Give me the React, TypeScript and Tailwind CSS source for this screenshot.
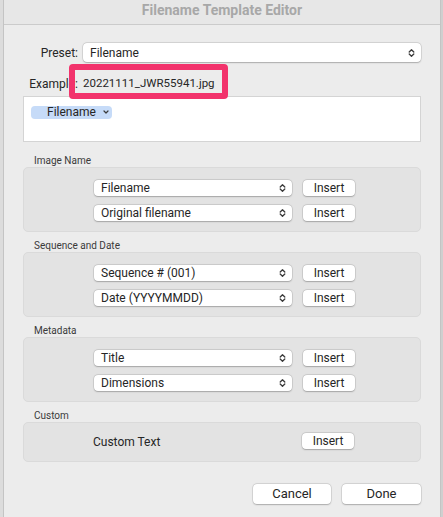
import React from "react";

function UpDown() {
  return (
    <svg width="7" height="10" viewBox="0 0 7 10" fill="none">
      <path d="M1.2 4 L3.5 1.7 L5.8 4" stroke="#3a3a3a" strokeWidth="1.3" strokeLinecap="round" strokeLinejoin="round" />
      <path d="M1.2 6 L3.5 8.3 L5.8 6" stroke="#3a3a3a" strokeWidth="1.3" strokeLinecap="round" strokeLinejoin="round" />
    </svg>
  );
}

function Popup({ label, className }: { label: string; className?: string }) {
  return (
    <div
      className={`flex items-center justify-between bg-white rounded-[4px] pl-[7px] pr-[6px] text-[12px] text-[#262626] shadow-[0_0_0_0.5px_rgba(0,0,0,0.14),0_0.5px_1.5px_rgba(0,0,0,0.22)] ${className ?? ""}`}
    >
      <span className="leading-none">{label}</span>
      <UpDown />
    </div>
  );
}

function Btn({ label, className }: { label: string; className?: string }) {
  return (
    <button
      className={`flex items-center justify-center bg-white rounded-[4px] text-[#262626] shadow-[0_0_0_0.5px_rgba(0,0,0,0.14),0_0.5px_1.5px_rgba(0,0,0,0.22)] ${className ?? ""}`}
    >
      {label}
    </button>
  );
}

function Group({ title, rows }: { title: string; rows: string[] }) {
  return (
    <div className="flex flex-col">
      <div className="pl-[11px] h-[12px] text-[10px] leading-[12px] text-[#3a3a3a]">{title}</div>
      <div className="h-[65px] bg-[#e3e3e3] border border-[#dadada] rounded-[5px] pt-[12px] pl-[70px] flex flex-col gap-[9px]">
        {rows.map((r) => (
          <div key={r} className="flex items-center gap-[11px] h-[16px]">
            <Popup label={r} className="w-[198px] h-[16px]" />
            <Btn label="Insert" className="w-[52px] h-[16px] text-[12px] -mt-[1px]" />
          </div>
        ))}
      </div>
    </div>
  );
}

export default function App() {
  return (
    <div className="w-[443px] h-[517px] flex overflow-hidden bg-[#d4d4d4] font-['Roboto','Liberation_Sans',sans-serif]">
      <div className="w-[3px] bg-[#dcdcdc]" />
      {/* Window */}
      <div className="w-[438px] flex flex-col bg-[#ececec] border-x border-[#c4c4c4]">
        {/* Title bar */}
        <div className="h-[25px] shrink-0 flex items-center justify-center bg-[#e7e7e7] border-b border-[#cbcbcb] pb-[4px]">
          <span className="text-[14px] font-bold text-[#a8a8a8]">Filename Template Editor</span>
        </div>

        <div className="flex flex-col px-[19px] pt-[18px]">
          {/* Preset */}
          <div className="flex items-center h-[19px] gap-[5px]">
            <span className="w-[55px] text-right text-[12px] text-[#262626]">Preset:</span>
            <Popup label="Filename" className="flex-1 h-[19px] pr-[5px]" />
          </div>

          {/* Example */}
          <div className="relative flex items-center h-[17px] mt-[13px] gap-[5px]">
            <span className="w-[55px] text-right text-[12px] text-[#262626]">Example:</span>
            <span className="text-[11.5px] text-[#262626]">20221111_JWR55941.jpg</span>
            <div className="absolute left-[46px] top-[-11px] w-[159px] h-[35px] border-[6px] border-[#f2336c] rounded-[4px]" />
          </div>

          {/* Token field */}
          <div className="mt-[4px] h-[46px] bg-white border border-[#d4d4d4] pt-[2px] pl-[7px]">
            <div className="inline-flex items-center h-[13px] rounded-[4px] bg-[#c6dbf8] pl-[16px] pr-[3px] gap-[7px] text-[12px] text-[#262626]">
              <span className="leading-none">Filename</span>
              <svg width="6" height="4" viewBox="0 0 6 4" fill="none">
                <path d="M1 1 L3 3 L5 1" stroke="#3a3a3a" strokeWidth="1.2" strokeLinecap="round" strokeLinejoin="round" />
              </svg>
            </div>
          </div>

          <div className="mt-[13px] flex flex-col gap-[8px]">
            <Group title="Image Name" rows={["Filename", "Original filename"]} />
            <Group title="Sequence and Date" rows={["Sequence # (001)", "Date (YYYYMMDD)"]} />
            <Group title="Metadata" rows={["Title", "Dimensions"]} />
            <div className="flex flex-col">
              <div className="pl-[11px] h-[12px] text-[10px] leading-[12px] text-[#3a3a3a]">Custom</div>
              <div className="h-[40px] bg-[#e3e3e3] border border-[#dadada] rounded-[5px] pl-[69px] flex items-center">
                <span className="w-[209px] text-[12px] text-[#262626]">Custom Text</span>
                <Btn label="Insert" className="w-[52px] h-[16px] text-[12px] -mt-[2px]" />
              </div>
            </div>
          </div>

          {/* Footer */}
          <div className="mt-[22px] flex justify-end gap-[11px]">
            <Btn label="Cancel" className="w-[78px] h-[20px] text-[13px]" />
            <Btn label="Done" className="w-[79px] h-[20px] text-[13px]" />
          </div>
        </div>
      </div>
      <div className="flex-1 bg-[#cfcfcf]" />
    </div>
  );
}
